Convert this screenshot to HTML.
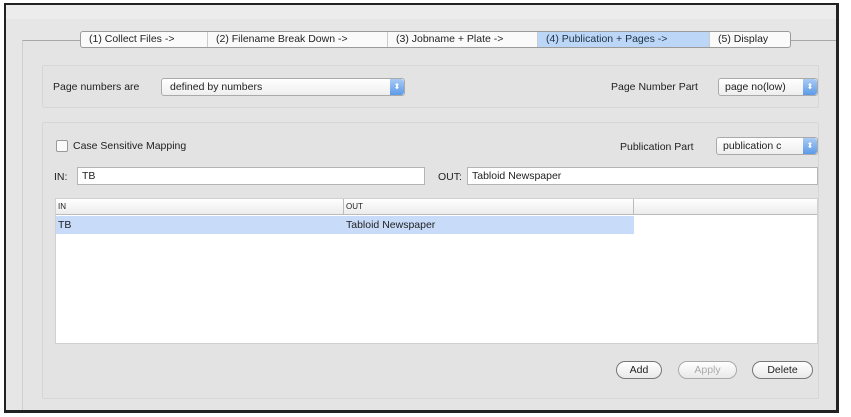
<!DOCTYPE html>
<html><head><style>
*{box-sizing:border-box;margin:0;padding:0}
body{width:851px;height:417px;background:#fff;position:relative;overflow:hidden;font-family:"Liberation Sans",sans-serif;font-size:10.5px;color:#222}
.a{position:absolute}
.winbg{left:4px;top:3px;width:835px;height:410px;background:#e6e6e6}
.win{left:4px;top:3px;width:835px;height:410px;border:2px solid #222;border-right-width:3px;border-bottom-width:3px;z-index:10}
.tabs{top:31px;left:80px;height:17px;display:flex;border:1px solid #9a9a9a;border-radius:3px;background:#fafafa;overflow:hidden}
.tabs div{padding:0 8px;line-height:15px;border-right:1px solid #ccc;white-space:nowrap}
.tabs .sel{background:#bcd6f7;color:#234}
.panel{border:1px solid #d6d6d6;background:#e3e3e3;border-radius:2px}
.sel1{background:linear-gradient(#fff,#eee);border:1px solid #aaa;border-radius:3px;height:18px;line-height:16px;padding-left:8px}
.arr{position:absolute;right:0;top:0;width:14px;height:16px;background:linear-gradient(#a9cbf5,#5d9ae8);border-radius:0 3px 3px 0;color:#fff;font-size:8px;text-align:center;line-height:16px}
.fld{background:#fff;border:1px solid #b5b5b5;height:18px;line-height:16px;padding-left:4px}
.btn{border:1px solid #777;border-radius:9px;background:linear-gradient(#fff,#e9e9e9);height:18px;line-height:16px;text-align:center}
</style></head><body>
<div class="a winbg"></div>
<div class="a" style="left:6px;top:5px;width:831px;height:14px;background:#ececec"></div>
<div class="a" style="left:22px;top:40px;width:814px;height:371px;border-left:1px solid #cfcfcf;border-top:1px solid #a8a8a8;background:#e4e4e4"></div>
<div class="a win"></div>
<div class="a tabs">
<div style="width:127px">(1) Collect Files -&gt;</div>
<div style="width:180px">(2) Filename Break Down -&gt;</div>
<div style="width:150px">(3) Jobname + Plate -&gt;</div>
<div class="sel" style="width:172px">(4) Publication + Pages -&gt;</div>
<div style="width:80px;border:0">(5) Display</div>
</div>
<div class="a panel" style="left:42px;top:65px;width:777px;height:43px"></div>
<div class="a" style="left:53px;top:81px">Page numbers are</div>
<div class="a sel1" style="left:161px;top:78px;width:244px">defined by numbers<div class="arr">⬍</div></div>
<div class="a" style="left:611px;top:81px">Page Number Part</div>
<div class="a sel1" style="left:718px;top:78px;width:100px;padding-left:6px">page no(low)<div class="arr">⬍</div></div>
<div class="a panel" style="left:42px;top:122px;width:777px;height:277px"></div>
<div class="a" style="left:56px;top:140px;width:12px;height:12px;border:1px solid #999;background:#fafafa;border-radius:2px"></div>
<div class="a" style="left:73px;top:140px">Case Sensitive Mapping</div>
<div class="a" style="left:620px;top:141px">Publication Part</div>
<div class="a sel1" style="left:716px;top:137px;width:102px;padding-left:6px;overflow:hidden;white-space:nowrap">publication c<div class="arr">⬍</div></div>
<div class="a" style="left:54px;top:171px">IN:</div>
<div class="a fld" style="left:77px;top:167px;width:348px">TB</div>
<div class="a" style="left:438px;top:171px">OUT:</div>
<div class="a fld" style="left:467px;top:167px;width:351px">Tabloid Newspaper</div>
<div class="a" style="left:55px;top:198px;width:763px;height:146px;background:#fff;border:1px solid #d0d0d0"></div>
<div class="a" style="left:56px;top:199px;width:761px;height:16px;background:linear-gradient(#fff,#ececec);border-bottom:1px solid #bbb;font-size:8px;line-height:15px"><span class="a" style="left:2px">IN</span><span class="a" style="left:290px">OUT</span></div>
<div class="a" style="left:343px;top:199px;width:1px;height:16px;background:#bbb"></div>
<div class="a" style="left:633px;top:199px;width:1px;height:16px;background:#bbb"></div>
<div class="a" style="left:56px;top:216px;width:578px;height:18px;background:#c8dcfa;line-height:18px"><span class="a" style="left:2px">TB</span><span class="a" style="left:290px">Tabloid Newspaper</span></div>
<div class="a btn" style="left:616px;top:361px;width:46px">Add</div>
<div class="a btn" style="left:678px;top:361px;width:59px;color:#aaa;border-color:#aaa">Apply</div>
<div class="a btn" style="left:752px;top:361px;width:61px">Delete</div>
</body></html>
